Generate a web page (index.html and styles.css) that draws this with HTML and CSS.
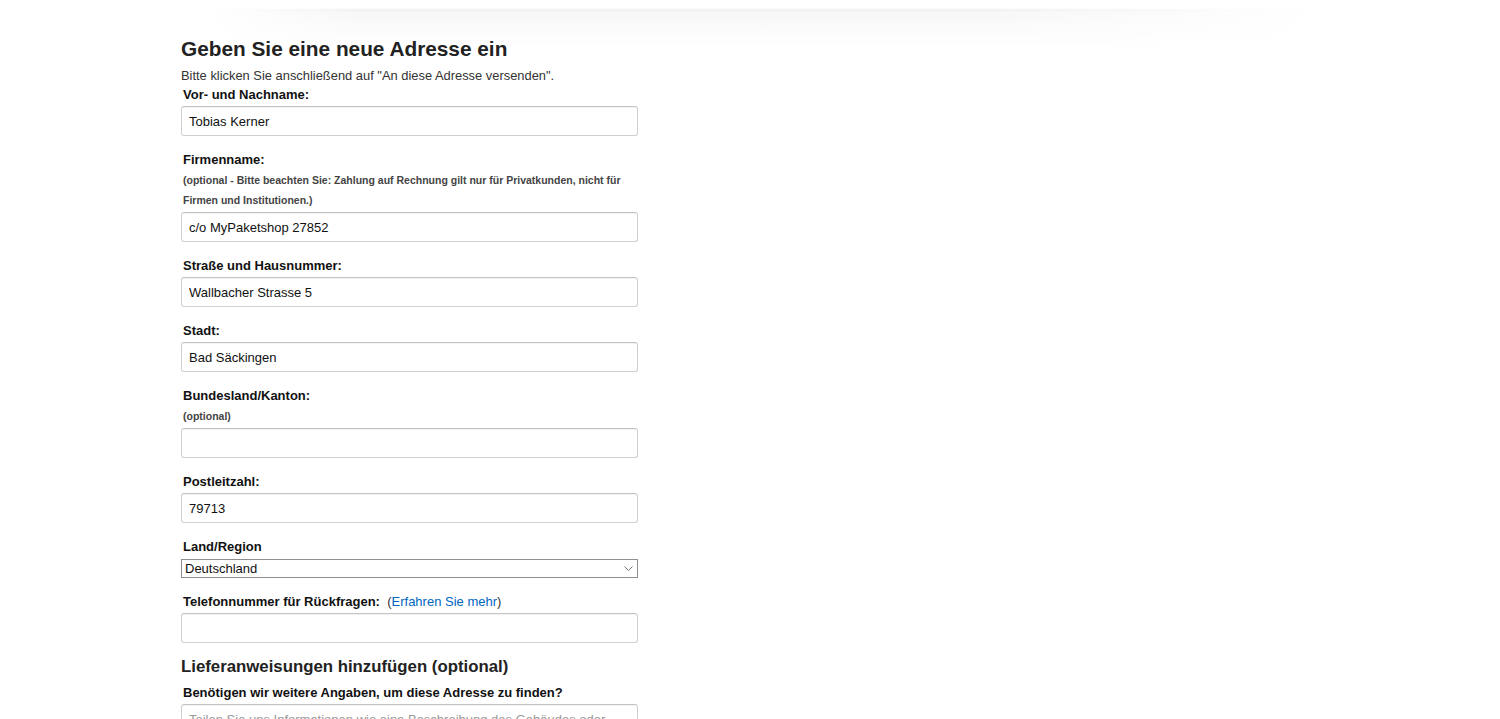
FILE: index.html
```html
<!DOCTYPE html>
<html lang="de">
<head>
    <meta charset="UTF-8">
    <meta name="viewport" content="width=device-width, initial-scale=1.0">
    <title>Neue Adresse</title>
    <link rel="stylesheet" href="styles.css">
</head>
<body>
    <div class="page">
        <form class="address-form">
            <h1>Geben Sie eine neue Adresse ein</h1>
            <p class="intro">Bitte klicken Sie anschließend auf "An diese Adresse versenden".</p>

            <div class="field first">
                <label class="form-label">Vor- und Nachname:</label>
                <input class="text-input" type="text" value="Tobias Kerner">
            </div>

            <div class="field">
                <label class="form-label">Firmenname:</label>
                <div class="hint">(optional - Bitte beachten Sie: Zahlung auf Rechnung gilt nur für Privatkunden, nicht für Firmen und Institutionen.)</div>
                <input class="text-input" type="text" value="c/o MyPaketshop 27852">
            </div>

            <div class="field">
                <label class="form-label">Straße und Hausnummer:</label>
                <input class="text-input" type="text" value="Wallbacher Strasse 5">
            </div>

            <div class="field">
                <label class="form-label">Stadt:</label>
                <input class="text-input" type="text" value="Bad Säckingen">
            </div>

            <div class="field">
                <label class="form-label">Bundesland/Kanton:</label>
                <div class="hint">(optional)</div>
                <input class="text-input" type="text" value="">
            </div>

            <div class="field">
                <label class="form-label">Postleitzahl:</label>
                <input class="text-input" type="text" value="79713">
            </div>

            <div class="field">
                <label class="form-label">Land/Region</label>
                <select class="country-select">
                    <option>Deutschland</option>
                    <option>Österreich</option>
                    <option>Schweiz</option>
                </select>
            </div>

            <div class="field">
                <label class="form-label">Telefonnummer für Rückfragen: <span class="more">&nbsp;(<a href="#">Erfahren Sie mehr</a>)</span></label>
                <input class="text-input" type="text" value="">
            </div>

            <h2>Lieferanweisungen hinzufügen (optional)</h2>

            <div class="field first">
                <label class="form-label">Benötigen wir weitere Angaben, um diese Adresse zu finden?</label>
                <textarea class="text-area" placeholder="Teilen Sie uns Informationen wie eine Beschreibung des Gebäudes oder einen Orientierungspunkt in der Nähe mit."></textarea>
            </div>
        </form>
    </div>
</body>
</html>
```

FILE: styles.css
```css
* {
    margin: 0;
    padding: 0;
    box-sizing: border-box;
}

body {
    font-family: 'Liberation Sans', Arial, sans-serif;
    font-size: 13px;
    line-height: 19px;
    color: #111;
    background-color: #fff;
    /* faint shadow left under the header strip */
    background-image:
        linear-gradient(to right, rgba(255, 255, 255, 1) 14%, rgba(255, 255, 255, 0) 24%, rgba(255, 255, 255, 0) 66%, rgba(255, 255, 255, 1) 88%),
        linear-gradient(to bottom, rgba(0, 0, 0, 0) 8px, rgba(0, 0, 0, 0.06) 10px, rgba(0, 0, 0, 0.03) 12px, rgba(0, 0, 0, 0) 48px);
    background-repeat: no-repeat;
    background-size: 100% 60px, 100% 60px;
}

.page {
    max-width: 1138px;
    margin: 0 auto;
    padding-top: 35px;
}

.address-form {
    width: 457px;
}

h1 {
    font-size: 20.8px;
    line-height: 27px;
    font-weight: 700;
    color: #222;
    margin-bottom: 4px;
}

.intro {
    font-size: 12.9px;
    line-height: 19px;
    color: #333;
}

.field {
    margin-top: 14px;
}

.field.first {
    margin-top: 0;
}

.form-label {
    display: block;
    padding-left: 2px;
    font-weight: 700;
    line-height: 19px;
    color: #111;
}

.hint {
    padding-left: 2px;
    padding-top: 1px;
    font-size: 10.5px;
    line-height: 20px;
    font-weight: 700;
    color: #444;
}

.text-input,
.text-area {
    display: block;
    width: 457px;
    height: 30px;
    margin-top: 2px;
    padding: 0 7px;
    font-family: 'Liberation Sans', Arial, sans-serif;
    font-size: 13px;
    color: #111;
    background: #fff;
    border: 1px solid #cfcfcf;
    border-top-color: #c4c4c4;
    border-radius: 3px;
    box-shadow: 0 1px 0 rgba(255, 255, 255, 0.5), 0 1px 0 rgba(0, 0, 0, 0.05) inset;
    outline: none;
}

.text-area {
    height: 70px;
    padding: 5px 7px;
    resize: none;
    line-height: 19px;
}

.text-area::placeholder {
    color: #999;
}

.country-select {
    display: block;
    width: 457px;
    height: 19px;
    margin-top: 3px;
    padding-left: 3px;
    font-family: 'Liberation Sans', Arial, sans-serif;
    font-size: 13px;
    color: #111;
    border: 1px solid #8f8f8f;
    border-radius: 0;
    appearance: none;
    -webkit-appearance: none;
    background: #fff url("data:image/svg+xml,%3Csvg xmlns='http://www.w3.org/2000/svg' width='9' height='5' viewBox='0 0 9 5'%3E%3Cpath d='M0.5 0.5 L4.5 4.5 L8.5 0.5' fill='none' stroke='%23707070' stroke-width='1'/%3E%3C/svg%3E") no-repeat right 4px center;
}

.more {
    font-weight: 400;
    color: #333;
}

.more a {
    color: #0066c0;
    text-decoration: none;
}

h2 {
    margin-top: 13px;
    margin-bottom: 5px;
    font-size: 16.8px;
    line-height: 22px;
    font-weight: 700;
    color: #222;
}
```
